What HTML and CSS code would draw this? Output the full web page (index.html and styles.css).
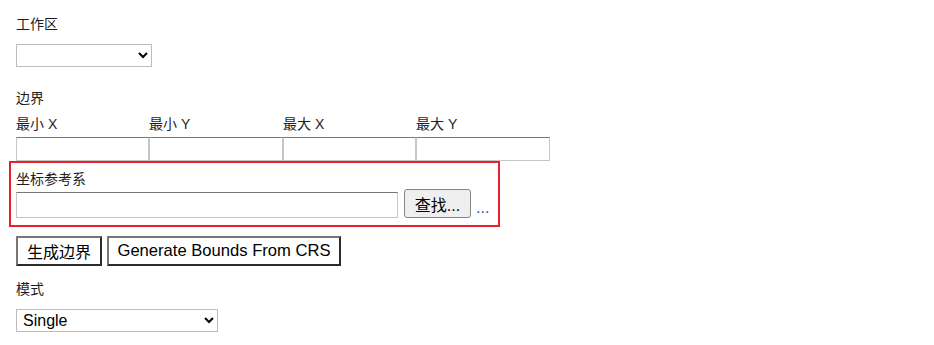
FILE: index.html
```html
<!DOCTYPE html>
<html lang="zh">
  <head>
    <meta charset="UTF-8" />
    <meta name="viewport" content="width=device-width, initial-scale=1.0" />
    <title>Document</title>
    <link rel="stylesheet" href="styles.css">
  </head>
  <body>
    <div class="form_wrap">
      <label class="field_label">工作区</label>
      <select class="ws_select"></select>

      <label class="field_label bounds_title">边界</label>
      <div class="bounds">
        <div class="bound">
          <label class="field_label">最小 X</label>
          <input type="text" />
        </div>
        <div class="bound">
          <label class="field_label">最小 Y</label>
          <input type="text" />
        </div>
        <div class="bound">
          <label class="field_label">最大 X</label>
          <input type="text" />
        </div>
        <div class="bound">
          <label class="field_label">最大 Y</label>
          <input type="text" />
        </div>
      </div>

      <div class="crs_box">
        <label class="field_label">坐标参考系</label>
        <div class="crs_row">
          <input type="text" class="crs_input" />
          <button class="find_btn">查找...</button>
          <a href="" class="more">...</a>
        </div>
      </div>

      <div class="actions">
        <button class="act_btn gen">生成边界</button>
        <button class="act_btn gen_crs">Generate Bounds From CRS</button>
      </div>

      <label class="field_label mode_title">模式</label>
      <select class="mode_select">
        <option>Single</option>
      </select>
    </div>
  </body>
</html>
```

FILE: styles.css
```css
* {
  margin: 0;
  padding: 0;
  box-sizing: border-box;
}
body {
  font-family: "Liberation Sans", "Noto Sans CJK SC", sans-serif;
  color: #1e1e1e;
  background: #fff;
}
.form_wrap {
  padding: 14px 0 0 16px;
}
.field_label {
  display: block;
  font-size: 14px;
  line-height: 20px;
}
select {
  display: block;
  height: 23px;
  font-family: inherit;
  font-size: 16px;
  border: 1px solid #bcbcbc;
  border-radius: 0;
  background: #fff;
  color: #000;
  padding-left: 2px;
}
.ws_select {
  width: 136px;
  margin-top: 10px;
}
.bounds_title {
  margin-top: 21px;
}
.bounds {
  display: grid;
  grid-template-columns: 133px 134px 133px 134px;
  margin-top: 6px;
}
.bound input {
  display: block;
  width: 100%;
  margin-top: 3px;
}
input {
  height: 24px;
  font-size: 16px;
  font-family: inherit;
  border: 1px solid #c6c6c6;
  border-top-color: #767676;
  background: #fff;
}
.crs_box {
  width: 491px;
  margin-left: -7px;
  padding: 6px 5px 7px;
  border: 2px solid #e8202a;
}
.crs_row {
  display: flex;
  align-items: flex-end;
}
.crs_input {
  width: 382px;
  height: 26px;
}
.find_btn {
  width: 67px;
  height: 29px;
  margin-left: 6px;
  font-family: inherit;
  font-size: 16px;
  color: #000;
  background: #efefef;
  border: 1px solid #858585;
  border-radius: 3px;
}
.more {
  margin-left: 5px;
  font-size: 16px;
  line-height: 20px;
  color: #0b64c0;
  text-decoration: none;
}
.actions {
  display: flex;
  gap: 5px;
  margin-top: 9px;
}
.act_btn {
  height: 30px;
  font-family: inherit;
  font-size: 16px;
  color: #000;
  background: #fff;
  border: 2px solid;
  border-color: #767676 #2b2b2b #2b2b2b #767676;
}
.gen {
  width: 86px;
}
.gen_crs {
  width: 234px;
  font-size: 16.6px;
}
.mode_title {
  margin-top: 13px;
}
.mode_select {
  width: 202px;
  margin-top: 10px;
}
```
